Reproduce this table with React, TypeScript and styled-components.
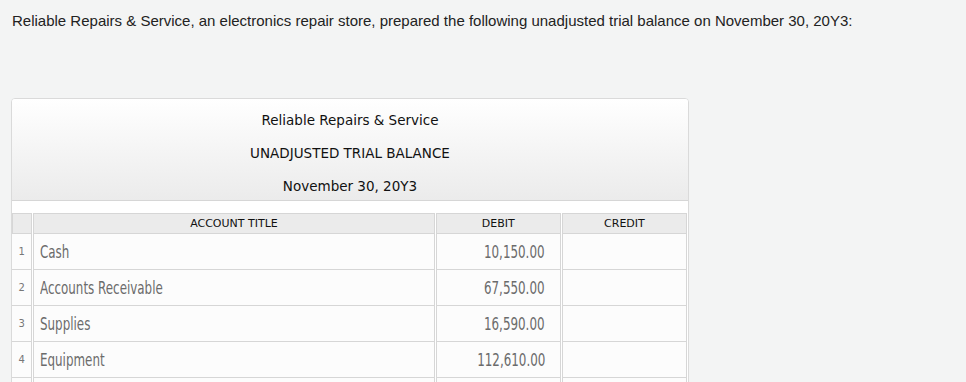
import React from 'react';
import styled, { createGlobalStyle } from 'styled-components';

type Row = { title: string; debit?: string; credit?: string };

const rows: Row[] = [
    { title: 'Cash', debit: '10,150.00' },
    { title: 'Accounts Receivable', debit: '67,550.00' },
    { title: 'Supplies', debit: '16,590.00' },
    { title: 'Equipment', debit: '112,610.00' },
    { title: '' },
];

const App = () => {
    return <Page>
        <GlobalStyle />
        <Intro>
            Reliable Repairs &amp; Service, an electronics repair store, prepared the following unadjusted trial balance on November 30, 20Y3:
        </Intro>
        <Card>
            <Heading>
                <HeadLine>Reliable Repairs &amp; Service</HeadLine>
                <HeadLine>UNADJUSTED TRIAL BALANCE</HeadLine>
                <HeadLine>November 30, 20Y3</HeadLine>
            </Heading>
            <Table>
                <colgroup>
                    <col style={{ width: 20 }} />
                    <col style={{ width: 398 }} />
                    <col style={{ width: 124 }} />
                    <col style={{ width: 124 }} />
                </colgroup>
                <thead>
                    <tr>
                        <Th />
                        <Th>ACCOUNT TITLE</Th>
                        <Th>DEBIT</Th>
                        <Th>CREDIT</Th>
                    </tr>
                </thead>
                <tbody>
                    {rows.map((r, i) => (
                        <tr key={i}>
                            <NumCell>{i + 1}</NumCell>
                            <Cell><Narrow>{r.title}</Narrow></Cell>
                            <Cell $right><Narrow $right>{r.debit}</Narrow></Cell>
                            <Cell $right><Narrow $right>{r.credit}</Narrow></Cell>
                        </tr>
                    ))}
                </tbody>
            </Table>
        </Card>
    </Page>
}

export default App

const GlobalStyle = createGlobalStyle`
    html, body {
        margin: 0;
        padding: 0;
        background: #f3f4f4;
    }
`
const Page = styled.div`
    padding: 12px 0 0 12px;
    height: 382px;
    box-sizing: border-box;
    overflow: hidden;
`
const Intro = styled.p`
    margin: 0;
    font-family: "Liberation Sans", Arial, sans-serif;
    font-size: 15px;
    line-height: 17px;
    color: #222;
`
const Card = styled.div`
    margin-top: 69px;
    margin-left: -1px;
    width: 676px;
    background: #fff;
    border: 1px solid #dadada;
    border-radius: 4px;
    overflow: hidden;
`
const Heading = styled.div`
    display: flex;
    flex-direction: column;
    align-items: center;
    gap: 15px;
    padding: 12px 0 5px;
    background: linear-gradient(to bottom, #ffffff, #ebebeb);
    border-bottom: 1px solid #d6d6d6;
`
const HeadLine = styled.div`
    font-family: "DejaVu Sans", Tahoma, sans-serif;
    font-size: 13.5px;
    line-height: 18px;
    color: #111;
`
const Table = styled.table`
    margin-top: 12px;
    border-collapse: separate;
    border-spacing: 1px 0;
    table-layout: fixed;
    margin-left: -1px;
    width: 677px;
`
const Th = styled.th`
    height: 19px;
    padding: 0;
    background: #ebebeb;
    border: 1px solid #d6d6d6;
    font-family: "DejaVu Sans", Tahoma, sans-serif;
    font-weight: normal;
    font-size: 11px;
    color: #111;
    text-align: center;
`
const Cell = styled.td<{ $right?: boolean }>`
    height: 35px;
    padding: 0 ${p => (p.$right ? '15px' : '6px')} 0 6px;
    background: #fcfcfc;
    border-left: 1px solid #d6d6d6;
    border-right: 1px solid #d6d6d6;
    border-bottom: 1px solid #d6d6d6;
    font-family: "DejaVu Sans", sans-serif;
    font-size: 17px;
    color: #6b6b6b;
    text-align: ${p => (p.$right ? 'right' : 'left')};
    white-space: nowrap;
`
// condensed look for the cell values
const Narrow = styled.span<{ $right?: boolean }>`
    display: inline-block;
    transform: scaleX(0.7);
    transform-origin: ${p => (p.$right ? 'right' : 'left')} center;
`
const NumCell = styled(Cell)`
    padding: 0;
    font-size: 10px;
    color: #777;
    text-align: center;
    border-left: none;
`
